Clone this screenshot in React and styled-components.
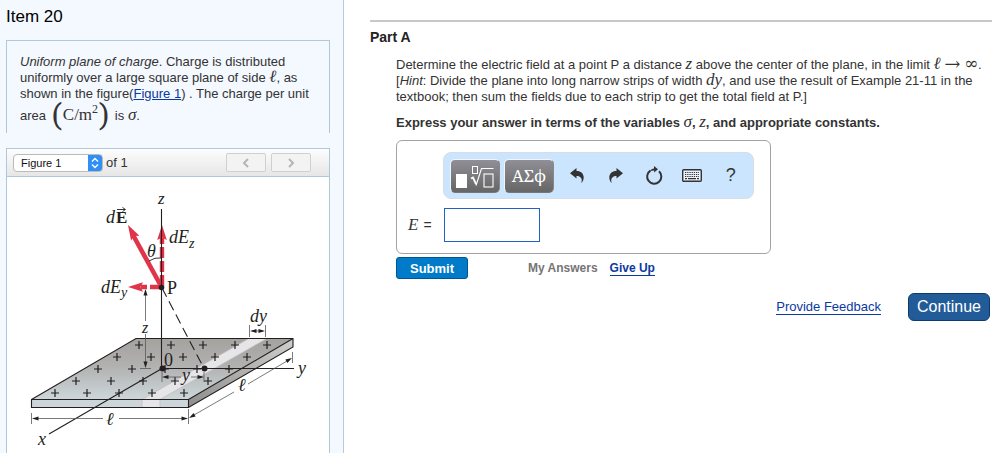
import React, { useState } from 'react';
import styled, { createGlobalStyle } from 'styled-components';

const GlobalStyle = createGlobalStyle`
    * {
        box-sizing: border-box;
    }
    body {
        margin: 0;
        background: #fff;
        color: #333;
        font-family: "Liberation Sans", Arial, sans-serif;
        font-size: 13px;
        line-height: 16px;
    }
    p, h1, h2 {
        margin: 0;
    }
`;

const Page = styled.div`
    display: flex;
    min-height: 100vh;
`;

const Sidebar = styled.aside`
    flex: 0 0 344px;
    display: flex;
    flex-direction: column;
    padding: 7px 13px 0 6px;
    background: #f4f8ff;
    border-right: 1px solid #b5cbdd;
`;

const ItemTitle = styled.h1`
    font-size: 17px;
    line-height: 20px;
    font-weight: normal;
    color: #000;
`;

const Passage = styled.div`
    margin-top: 13px;
    padding: 13px 12px 4px 13px;
    border: 1px solid #b0c8da;
    border-bottom: none;
`;

const MathText = styled.span`
    font-family: "Liberation Serif", "DejaVu Serif", serif;
    font-size: ${props => props.$size || 17}px;
    font-style: ${props => (props.$upright ? 'normal' : 'italic')};
    font-weight: normal;
    line-height: 12px;

    sup {
        font-size: 12px;
        line-height: 10px;
    }
`;

const MathSymbol = styled.span`
    font-family: "DejaVu Math TeX Gyre", "DejaVu Serif", serif;
    font-size: 17px;
    font-weight: normal;
    line-height: 12px;
`;

const Paren = styled.span`
    font-family: "DejaVu Math TeX Gyre", "Liberation Serif", serif;
    font-size: 31px;
    line-height: 27px;
    vertical-align: -5px;
`;

const TextLink = styled.a`
    color: #0a3aa0;
    font-weight: ${props => (props.$bold ? 'bold' : 'normal')};
    text-decoration: none;
    border-bottom: 1px solid #0a3aa0;
    line-height: 14px;
`;

const InlineLink = styled.a`
    color: #0a3aa0;
    text-decoration: underline;
`;

const FigurePanel = styled.section`
    flex: 1;
    margin-top: 15px;
    border: 1px solid #b0c8da;
    border-bottom: none;
    background: #fff;
`;

const FigureBar = styled.div`
    display: flex;
    align-items: center;
    height: 28px;
    padding: 0 18px 0 6px;
    border-bottom: 1px solid #b0c8da;
    background: linear-gradient(#fdfdfd, #e6e6e6);
`;

const SelectWrap = styled.label`
    display: flex;
    align-items: stretch;
    height: 18px;
    margin-right: 3px;
    border: 1px solid #bbb;
    border-radius: 4px;
    background: linear-gradient(to right, #fff 74px, #2f8ff8 74px);
    overflow: hidden;

    svg {
        width: 14px;
        height: 16px;
        pointer-events: none;
    }
`;

const FigureSelect = styled.select`
    appearance: none;
    width: 74px;
    padding: 0 0 0 7px;
    border: none;
    background: transparent;
    font-family: "Liberation Sans", Arial, sans-serif;
    font-size: 11px;
    color: #111;
`;

const Pager = styled.div`
    display: flex;
    gap: 5px;
    margin-left: auto;
`;

const PagerButton = styled.button`
    display: flex;
    align-items: center;
    justify-content: center;
    width: 40px;
    height: 19px;
    padding: 0;
    border: 1px solid #d0d0d0;
    border-radius: 2px;
    background: #f3f3f3;
`;

const Figure = styled.svg`
    display: block;
    width: 100%;
    height: auto;
    font-family: "Liberation Serif", "Times New Roman", serif;
    font-size: 18px;
    fill: #231f20;
`;

const Main = styled.main`
    flex: 1;
    min-width: 0;
    padding: 20px 9px 0 26px;
`;

const PartTitle = styled.h2`
    padding-top: 7px;
    border-top: 2px solid #c8c8c8;
    font-size: 14px;
    line-height: 16px;
    color: #222;
`;

const PartBody = styled.div`
    padding: 12px 0 0 26px;
`;

const Instruction = styled.p`
    margin-top: 10px;
    font-weight: bold;
`;

const AnswerBox = styled.div`
    display: flex;
    flex-direction: column;
    gap: 9px;
    max-width: 375px;
    margin-top: 9px;
    padding: 11px 16px 11px 11px;
    border: 1px solid #a3a3a3;
    border-radius: 6px;
`;

const Toolbar = styled.div`
    display: flex;
    align-items: center;
    height: 47px;
    margin-left: 35px;
    padding: 0 3px 0 6px;
    border: 1px solid #d8dce4;
    border-radius: 8px;
    background: #cce5ff;
`;

const PaletteButton = styled.button`
    display: flex;
    align-items: center;
    justify-content: center;
    width: 50px;
    height: 34px;
    margin-right: 4px;
    padding: 0;
    border: 1px solid #f4f4f4;
    border-right-color: #888;
    border-bottom-color: #777;
    border-radius: 5px;
    background: linear-gradient(#908f96, #666);
    color: #fff;
    font-family: "Noto Serif", "DejaVu Serif", serif;
    font-size: 17px;
`;

const IconRow = styled.div`
    display: flex;
    flex: 1;
`;

const IconButton = styled.button`
    display: flex;
    flex: 1;
    align-items: center;
    justify-content: center;
    height: 34px;
    padding: 0;
    border: none;
    background: none;
    color: #333;
    font-family: "Liberation Sans", Arial, sans-serif;
    font-size: 18px;
`;

const AnswerRow = styled.label`
    display: flex;
    align-items: center;
    gap: 12px;
`;

const AnswerLabel = styled.span`
    display: flex;
    align-items: baseline;
    gap: 5px;
    font-size: 14px;
`;

const AnswerInput = styled.input`
    width: 96px;
    height: 34px;
    padding: 0 6px;
    border: 1px solid #2461c4;
    background: #fff;
    font-size: 16px;
`;

const Actions = styled.div`
    display: flex;
    align-items: center;
    margin-top: 3px;
    font-size: 12px;
`;

const SubmitButton = styled.button`
    width: 72px;
    height: 22px;
    margin-right: 60px;
    padding: 0;
    border: 1px solid #00568f;
    border-radius: 3px;
    background: #007ac9;
    color: #fff;
    font-family: "Liberation Sans", Arial, sans-serif;
    font-size: 13px;
    font-weight: bold;
`;

const MyAnswers = styled.span`
    margin-right: 12px;
    color: #757575;
    font-weight: bold;
`;

const Footer = styled.div`
    display: flex;
    align-items: center;
    justify-content: flex-end;
    gap: 27px;
    margin-top: 14px;
    padding-right: 2px;
`;

const ContinueButton = styled.button`
    width: 82px;
    height: 28px;
    padding: 0;
    border: 1px solid #0c3c6e;
    border-radius: 6px;
    background: #225c98;
    color: #fff;
    font-family: "Liberation Sans", Arial, sans-serif;
    font-size: 16px;
`;

const charges = [
    [139, 345], [171, 345], [203, 345], [235, 345], [267, 345],
    [117, 357], [151, 357], [183, 357], [215, 357], [247, 357],
    [98, 369], [132, 369], [165, 369], [197, 369], [229, 369],
    [76, 381], [111, 381], [143, 381], [175, 381], [208, 381],
    [55, 393], [87, 393], [119, 393], [152, 393], [184, 393],
];

// small arrow head pointing right, placed with its tip at x, y
function Tip({ x, y, angle = 0 }) {
    return <path d="M0 0L-6.5 -2L-6.5 2Z" transform={`translate(${x} ${y}) rotate(${angle})`} />;
}

function ForceTip({ x, y, angle }) {
    return <path d="M0 0L-15 -4.8L-12.5 0L-15 4.8Z" fill="#e0344a" transform={`translate(${x} ${y}) rotate(${angle})`} />;
}

function ChargedPlane() {
    return (
        <Figure viewBox="7 177 322 276" role="img" aria-label="Charged square plane">
            <defs>
                <linearGradient id="top" x1="0" y1="0" x2="0" y2="1">
                    <stop offset="0" stopColor="#a5a29f" />
                    <stop offset="0.45" stopColor="#b1b1b0" />
                    <stop offset="1" stopColor="#cdd7da" />
                </linearGradient>
                <linearGradient id="side" x1="0" y1="1" x2="1" y2="0">
                    <stop offset="0" stopColor="#8e8e8d" />
                    <stop offset="1" stopColor="#cfcecd" />
                </linearGradient>
            </defs>

            <path d="M31.5 399.5L136 338.5H293L188.5 399.5Z" fill="url(#top)" />
            <path d="M31.5 399.5H188.5V407.5H31.5Z" fill="#ccd6da" />
            <path d="M188.5 399.5L293 338.5V347L188.5 407.5Z" fill="url(#side)" />
            <path d="M248 339H266L160 399.5V407H142V399.5Z" fill="#e6e5e8" />
            <path d="M248 339L142 399.5V407M266 339L160 399.5V407" fill="none" stroke="#c0bfc2" strokeWidth="0.8" />
            <path d="M31.5 399.5L136 338.5H293V347L188.5 407.5H31.5ZM31.5 399.5H188.5V407.5M188.5 399.5L293 338.5" fill="none" stroke="#231f20" strokeWidth="1.1" />

            <path
                d={charges.map(([x, y]) => `M${x - 4} ${y}h8M${x} ${y - 4}v8`).join('')}
                fill="none"
                stroke="#231f20"
                strokeWidth="1.2"
            />

            <g fill="none" stroke="#231f20" strokeWidth="1.1">
                <path d="M162 368.5H294M162 368.5L49 434" />
                <path d="M162 288L204 368.5" strokeDasharray="10 5" />
            </g>

            <g fill="none" stroke="#58575a" strokeWidth="0.8">
                <path d="M145.5 292V321M145.5 334V364M140 368.5H151" />
                <path d="M162 372V382M204 372V382M165 377H181M191 377H201" />
                <path d="M249.5 325V337M265.5 325V337M252 331H263" />
                <path d="M31.5 413V424M188.5 409V424M34 418.5H103M119 418.5H186" />
                <path d="M292.5 352V363M194 415L234 392M248 384L287 361" />
            </g>
            <Tip x={145.5} y={289} angle={-90} />
            <Tip x={145.5} y={368} angle={90} />
            <Tip x={162} y={377} angle={180} />
            <Tip x={204} y={377} />
            <Tip x={250} y={331} angle={180} />
            <Tip x={265} y={331} />
            <Tip x={32} y={418.5} angle={180} />
            <Tip x={188} y={418.5} />
            <Tip x={189} y={418} angle={150} />
            <Tip x={292} y={358} angle={-30} />

            <path d="M162 286V238M161 287H141" fill="none" stroke="#e0344a" strokeWidth="4.4" strokeDasharray="11 3" />
            <path d="M161 286L133 235" fill="none" stroke="#e0344a" strokeWidth="4.6" />
            <ForceTip x={162} y={225} angle={-90} />
            <ForceTip x={128} y={287} angle={180} />
            <ForceTip x={128} y={225} angle={-119} />
            <path d="M161.5 209V368" fill="none" stroke="#231f20" strokeWidth="1.1" />
            <path d="M149 261Q155 257 161 258" fill="none" stroke="#231f20" strokeWidth="0.9" />
            <circle cx="161.5" cy="287.5" r="2.8" />
            <circle cx="162.5" cy="368.5" r="3" />
            <circle cx="204.5" cy="368.5" r="3" />

            <g fontStyle="italic">
                <text x="158" y="204" fontSize="17">z</text>
                <text x="106" y="223">d</text>
                <text x="169" y="243">dE<tspan fontSize="14" dy="5">z</tspan></text>
                <text x="101" y="293">dE<tspan fontSize="14" dy="4">y</tspan></text>
                <text x="147" y="257">θ</text>
                <text x="142" y="333" fontSize="16">z</text>
                <text x="250" y="322">dy</text>
                <text x="298" y="374">y</text>
                <text x="182" y="381">y</text>
                <text x="38" y="445">x</text>
                <text x="106" y="425">ℓ</text>
                <text x="238" y="391">ℓ</text>
            </g>
            <text x="116" y="223" fontSize="17" fontWeight="bold">E</text>
            <path d="M117 209.5H125M122.5 207.5L125.5 209.5L122.5 211.5" fill="none" stroke="#231f20" strokeWidth="0.9" />
            <text x="167" y="294">P</text>
            <text x="164" y="366">0</text>
        </Figure>
    );
}

function UndoIcon({ flip }) {
    return (
        <svg width="14" height="15" viewBox="0 0 14 15" fill="currentColor">
            <path
                d="M0 5.2L6.5 0V3C11 3 13.7 5.7 13.7 9.5C13.7 11.8 12.8 13.7 11.3 15C11.9 13 12 11.4 11.1 10C10.2 8.5 8.7 7.9 6.5 7.9V10.6Z"
                transform={flip ? 'matrix(-1 0 0 1 14 0)' : undefined}
            />
        </svg>
    );
}

function ResetIcon() {
    return (
        <svg width="18" height="19" viewBox="0 0 18 19">
            <path d="M14 5.3A7.1 7.1 0 1 1 5.4 4.6" fill="none" stroke="currentColor" strokeWidth="2" />
            <path d="M4.6 5.3C5.9 3.6 7.4 2.7 9 2.5V0L13 3.3L9.2 6.6V4.4C7.6 4.5 6.2 4.8 4.6 5.3Z" fill="currentColor" />
        </svg>
    );
}

function KeyboardIcon() {
    return (
        <svg width="20" height="13" viewBox="0 0 20 13">
            <rect x="0.7" y="0.7" width="18.6" height="11.6" rx="1" fill="#eaf3fd" stroke="currentColor" strokeWidth="1.4" />
            <path d="M3 3.5H17M3 5.5H17M3 7.5H17" stroke="currentColor" strokeWidth="1.2" strokeDasharray="1.3 0.9" />
            <path d="M3 9.7H5M6 9.7H14M15 9.7H17" stroke="currentColor" strokeWidth="1.3" />
        </svg>
    );
}

function RootIcon() {
    return (
        <svg width="38" height="24" viewBox="0 0 38 24" fill="none" stroke="#fff">
            <rect x="0" y="10" width="11" height="14" fill="#fff" stroke="none" />
            <rect x="16.5" y="2.5" width="5" height="7" strokeWidth="1" />
            <path d="M15 14.5L17 13.5L20 20" strokeWidth="1.8" />
            <path d="M20 21.5L25.5 4.5H37.5" strokeWidth="1.1" />
            <rect x="28" y="10" width="9" height="13" strokeWidth="1.1" />
        </svg>
    );
}

function App() {
    const [answer, setAnswer] = useState('');

    return (
        <>
            <GlobalStyle />
            <Page>
                <Sidebar>
                    <ItemTitle>Item 20</ItemTitle>
                    <Passage>
                        <p>
                            <em>Uniform plane of charge</em>. Charge is distributed uniformly over a large square plane of
                            side <MathText>ℓ</MathText>, as shown in the figure(<InlineLink href="#figure">Figure 1</InlineLink>) .
                            The charge per unit area <Paren>(</Paren><MathText $upright>C/m<sup>2</sup></MathText><Paren>)</Paren> is <MathText>σ</MathText>.
                        </p>
                    </Passage>
                    <FigurePanel id="figure">
                        <FigureBar>
                            <SelectWrap>
                                <FigureSelect aria-label="Figure">
                                    <option>Figure 1</option>
                                </FigureSelect>
                                <svg viewBox="0 0 14 16" fill="none" stroke="#fff" strokeWidth="1.4">
                                    <path d="M4 6.5L7 3.5L10 6.5M4 9.5L7 12.5L10 9.5" />
                                </svg>
                            </SelectWrap>
                            <span>of 1</span>
                            <Pager>
                                <PagerButton aria-label="Previous figure">
                                    <svg width="8" height="10" viewBox="0 0 8 10" fill="none" stroke="#b5b5b5" strokeWidth="2">
                                        <path d="M6 1L2 5L6 9" />
                                    </svg>
                                </PagerButton>
                                <PagerButton aria-label="Next figure">
                                    <svg width="8" height="10" viewBox="0 0 8 10" fill="none" stroke="#b5b5b5" strokeWidth="2">
                                        <path d="M2 1L6 5L2 9" />
                                    </svg>
                                </PagerButton>
                            </Pager>
                        </FigureBar>
                        <ChargedPlane />
                    </FigurePanel>
                </Sidebar>

                <Main>
                    <PartTitle>Part A</PartTitle>
                    <PartBody>
                        <p>
                            Determine the electric field at a point P a distance <MathText>z</MathText> above the center of the
                            plane, in the limit <MathText>ℓ</MathText> <MathSymbol>→</MathSymbol> <MathSymbol>∞</MathSymbol>.
                            <br />
                            [<em>Hint</em>: Divide the plane into long narrow strips of width <MathText>dy</MathText>, and use the
                            result of Example 21-11 in the textbook; then sum the fields due to each strip to get the total field at P.]
                        </p>
                        <Instruction>
                            Express your answer in terms of the variables <MathText>σ</MathText>, <MathText>z</MathText>, and
                            appropriate constants.
                        </Instruction>
                        <AnswerBox>
                            <Toolbar>
                                <PaletteButton aria-label="Templates"><RootIcon /></PaletteButton>
                                <PaletteButton>ΑΣϕ</PaletteButton>
                                <IconRow>
                                    <IconButton aria-label="Undo"><UndoIcon /></IconButton>
                                    <IconButton aria-label="Redo"><UndoIcon flip /></IconButton>
                                    <IconButton aria-label="Reset"><ResetIcon /></IconButton>
                                    <IconButton aria-label="Keyboard shortcuts"><KeyboardIcon /></IconButton>
                                    <IconButton>?</IconButton>
                                </IconRow>
                            </Toolbar>
                            <AnswerRow>
                                <AnswerLabel><MathText>E</MathText> =</AnswerLabel>
                                <AnswerInput value={answer} onChange={e => setAnswer(e.target.value)} />
                            </AnswerRow>
                        </AnswerBox>
                        <Actions>
                            <SubmitButton>Submit</SubmitButton>
                            <MyAnswers>My Answers</MyAnswers>
                            <TextLink href="#give-up" $bold>Give Up</TextLink>
                        </Actions>
                    </PartBody>
                    <Footer>
                        <TextLink href="#feedback">Provide Feedback</TextLink>
                        <ContinueButton>Continue</ContinueButton>
                    </Footer>
                </Main>
            </Page>
        </>
    );
}

export default App;
